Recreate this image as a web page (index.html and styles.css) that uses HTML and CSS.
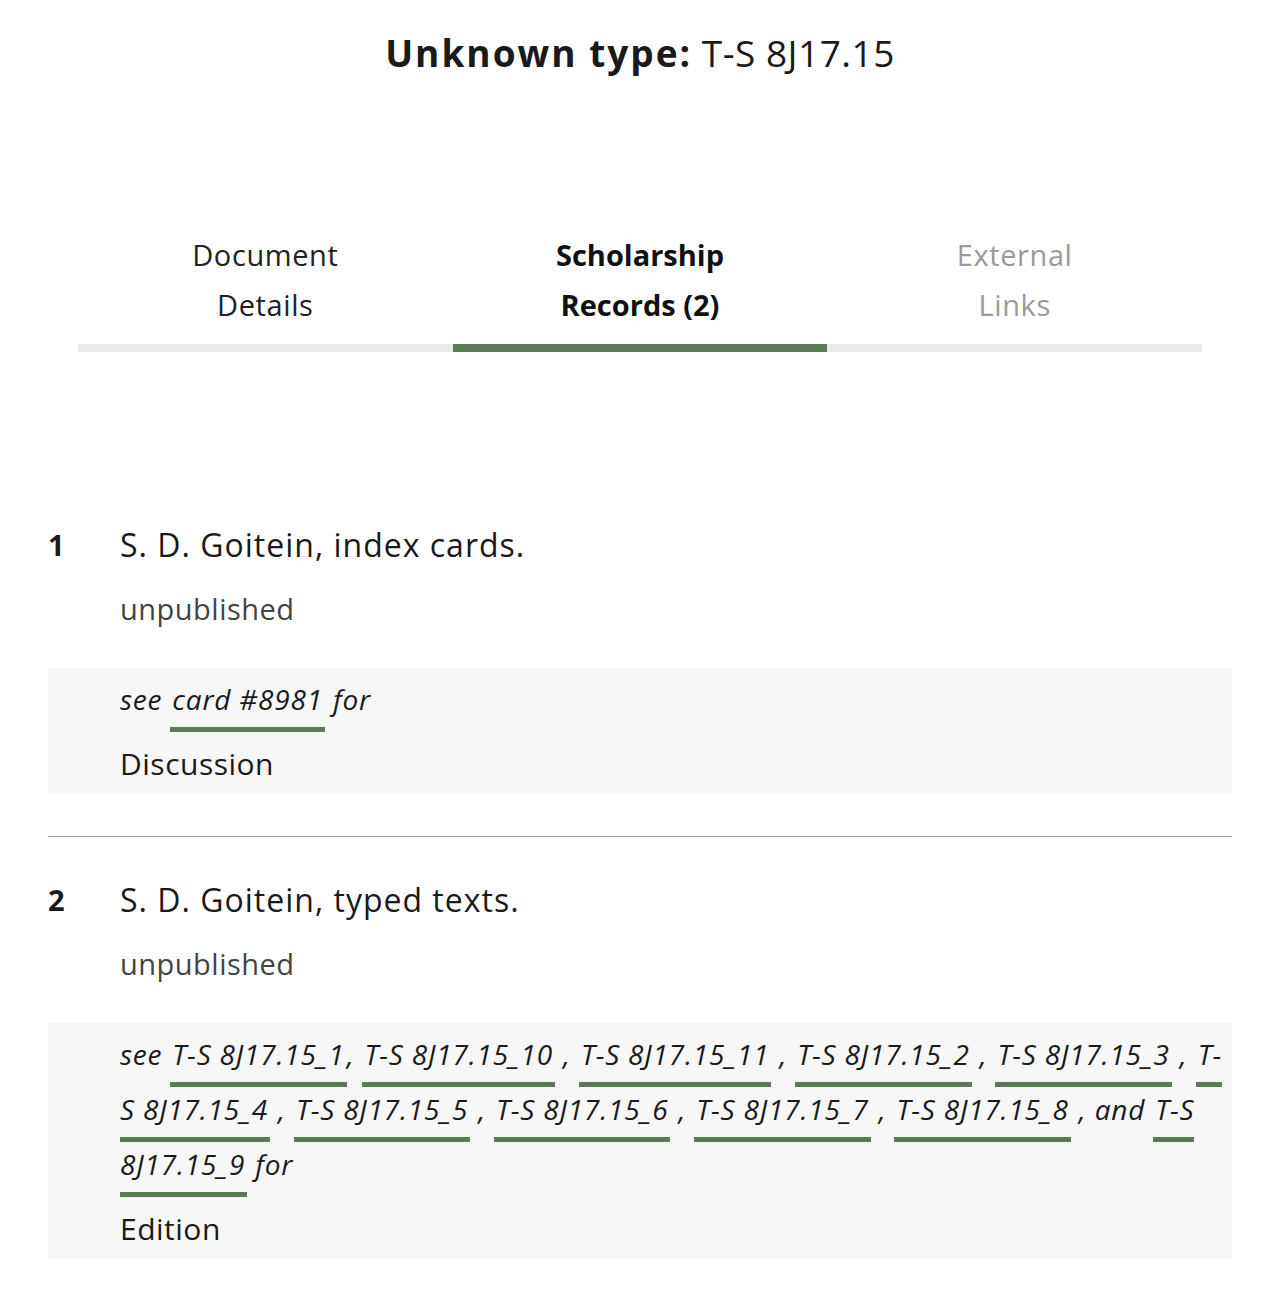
FILE: index.html
```html
<!DOCTYPE html>
<html lang="en">
<head>
<meta charset="utf-8">
<title>Unknown type: T-S 8J17.15</title>
<link rel="stylesheet" href="styles.css">
</head>
<body>
<main class="page">
  <h1 class="title"><span class="title-type">Unknown type:</span> <span class="title-shelf">T-S 8J17.15</span></h1>

  <nav class="tabs">
    <a class="tab" href="#">Document<br>Details</a>
    <a class="tab tab-active" href="#">Scholarship<br>Records (2)</a>
    <span class="tab tab-disabled">External<br>Links</span>
  </nav>

  <ol class="records">
    <li class="record">
      <div class="record-head">
        <span class="record-num">1</span>
        <div class="record-body">
          <p class="record-title">S. D. Goitein, index cards.</p>
          <p class="record-status">unpublished</p>
        </div>
      </div>
      <div class="record-box">
        <p class="record-see">see <a href="#">card #8981</a> for</p>
        <p class="record-label">Discussion</p>
      </div>
    </li>
    <li class="record">
      <div class="record-head">
        <span class="record-num">2</span>
        <div class="record-body">
          <p class="record-title">S. D. Goitein, typed texts.</p>
          <p class="record-status">unpublished</p>
        </div>
      </div>
      <div class="record-box">
        <p class="record-see">see <a href="#">T-S 8J17.15_1</a>, <a href="#">T-S 8J17.15_10</a> , <a href="#">T-S 8J17.15_11</a> , <a href="#">T-S 8J17.15_2</a> , <a href="#">T-S 8J17.15_3</a> , <a href="#">T-S 8J17.15_4</a> , <a href="#">T-S 8J17.15_5</a> , <a href="#">T-S 8J17.15_6</a> , <a href="#">T-S 8J17.15_7</a> , <a href="#">T-S 8J17.15_8</a> , and <a href="#">T-S 8J17.15_9</a> for</p>
        <p class="record-label">Edition</p>
      </div>
    </li>
  </ol>
</main>
</body>
</html>
```

FILE: styles.css
```css
* { box-sizing: border-box; }

html, body {
  margin: 0;
  padding: 0;
  background: #ffffff;
  color: #1a1a1a;
  font-family: "Open Sans", "Noto Sans", sans-serif;
}

.page {
  padding: 0 54px 0 48px;
}

.title {
  margin: 0;
  padding-top: 28px;
  text-align: center;
  font-size: 37px;
  line-height: 50px;
  font-weight: 400;
  color: #1a1a1a;
}

.title-type {
  font-weight: 700;
  letter-spacing: 2px;
}

.title-shelf {
  letter-spacing: 0.5px;
}

.tabs {
  display: grid;
  grid-template-columns: 1fr 1fr 1fr;
  margin: 152px 30px 0 30px;
}

.tab {
  display: block;
  text-align: center;
  font-size: 29px;
  line-height: 50px;
  letter-spacing: 0.6px;
  padding-bottom: 14px;
  color: #222222;
  text-decoration: none;
  border-bottom: 8px solid #ebebeb;
}

.tab-active {
  font-weight: 700;
  letter-spacing: 0;
  color: #111111;
  border-bottom-color: #5c7a57;
}

.tab-disabled {
  color: #9a9a9a;
}

.records {
  list-style: none;
  margin: 170px 0 0 0;
  padding: 0;
}

.record {
  padding-bottom: 42px;
}

.record + .record {
  border-top: 1px solid #a3a3a3;
  padding-top: 40px;
}

.record-head {
  display: flex;
}

.record-num {
  width: 72px;
  font-size: 29px;
  line-height: 46px;
  font-weight: 700;
  color: #1a1a1a;
}

.record-body p {
  margin: 0;
}

.record-title {
  font-size: 32px;
  line-height: 46px;
  letter-spacing: 1px;
  color: #1a1a1a;
}

.record-status {
  margin-top: 18px !important;
  font-size: 29px;
  line-height: 46px;
  letter-spacing: 0.5px;
  color: #444444;
}

.record-box {
  margin-top: 36px;
  background: #f7f7f7;
  padding: 4px 0 7px 72px;
}

.record-box p {
  margin: 0;
}

.record-see {
  font-style: italic;
  font-size: 28px;
  line-height: 55px;
  letter-spacing: 0.78px;
  color: #1a1a1a;
}

.record-see a {
  color: #1a1a1a;
  text-decoration: none;
  padding: 0 2px 9px 2px;
  border-bottom: 5px solid #5c7a57;
}

.record-label {
  margin-top: 14px !important;
  font-size: 30px;
  line-height: 46px;
  letter-spacing: 0.5px;
  color: #1a1a1a;
}
```
